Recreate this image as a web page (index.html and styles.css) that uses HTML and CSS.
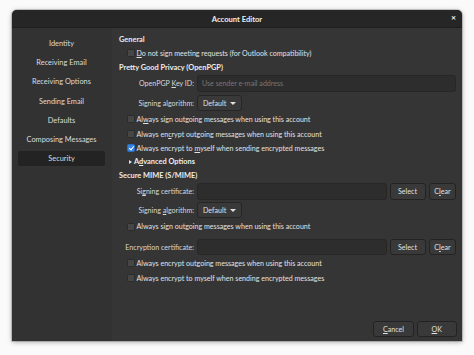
FILE: index.html
```html
<!DOCTYPE html>
<html lang="en">
<head>
    <meta charset="UTF-8">
    <title>Account Editor</title>
    <link rel="stylesheet" href="styles.css">
</head>
<body>
    <div class="window">
        <div class="titlebar">
            <span class="title">Account Editor</span>
            <span class="close">&#x2715;</span>
        </div>
        <div class="main">
            <!-- Page list -->
            <div class="sidebar">
                <div class="page">Identity</div>
                <div class="page">Receiving Email</div>
                <div class="page">Receiving Options</div>
                <div class="page">Sending Email</div>
                <div class="page">Defaults</div>
                <div class="page">Composing Messages</div>
                <div class="page selected">Security</div>
            </div>

            <div class="content">
                <div class="row r-general"><span class="heading">General</span></div>
                <div class="row r-cb1 indent"><span class="check"></span><span><u>D</u>o not sign meeting requests (for Outlook compatibility)</span></div>

                <div class="row r-pgp"><span class="heading">Pretty Good Privacy (OpenPGP)</span></div>
                <div class="row field r-keyid">
                    <span class="label">OpenPGP <u>K</u>ey ID:</span>
                    <span class="entry placeholder">Use sender e-mail address</span>
                </div>
                <div class="row field r-algo">
                    <span class="label">Signing algorithm:</span>
                    <span class="combo">Default <span class="arrow"></span></span>
                </div>
                <div class="row r-cb2 indent"><span class="check"></span><span>Al<u>w</u>ays sign outgoing messages when using this account</span></div>
                <div class="row r-cb3 indent"><span class="check"></span><span>Always en<u>c</u>rypt outgoing messages when using this account</span></div>
                <div class="row r-cb4 indent"><span class="check checked"></span><span>Always encrypt to <u>m</u>yself when sending encrypted messages</span></div>
                <div class="row r-adv indent"><span class="expander"></span><span class="heading">A<u>d</u>vanced Options</span></div>

                <div class="row r-smime"><span class="heading">Secure MIME (S/MIME)</span></div>
                <div class="row field r-signcert">
                    <span class="label">Si<u>g</u>ning certificate:</span>
                    <span class="entry"></span>
                    <span class="btn select">Select</span>
                    <span class="btn clear">C<u>l</u>ear</span>
                </div>
                <div class="row field r-algo2">
                    <span class="label">Signing <u>a</u>lgorithm:</span>
                    <span class="combo">Default <span class="arrow"></span></span>
                </div>
                <div class="row r-cb5 indent"><span class="check"></span><span>Always sign outgoing messages when using this account</span></div>
                <div class="row field r-enccert">
                    <span class="label">Encryption certificate:</span>
                    <span class="entry"></span>
                    <span class="btn select">Select</span>
                    <span class="btn clear">C<u>l</u>ear</span>
                </div>
                <div class="row r-cb6 indent"><span class="check"></span><span>Always encrypt outgoing messages when using this account</span></div>
                <div class="row r-cb7 indent"><span class="check"></span><span>Always encrypt to myself when sending encrypted messages</span></div>

                <div class="footer">
                    <span class="btn cancel"><u>C</u>ancel</span>
                    <span class="btn ok"><u>O</u>K</span>
                </div>
            </div>
        </div>
    </div>
</body>
</html>
```

FILE: styles.css
```css
* {
    margin: 0;
    padding: 0;
    box-sizing: border-box;
}

html, body {
    width: 474px;
    height: 355px;
    overflow: hidden;
}

body {
    background: #fafafa;
    font-family: Lato, "Open Sans", sans-serif;
    font-size: 7.4px;
    color: #e2e2e2;
}

u {
    text-decoration-thickness: 0.5px;
    text-underline-offset: 1px;
}

.window {
    margin: 10px 0 0 12px;
    width: 450px;
    height: 331px;
    background: #353535;
    border-radius: 5px 5px 0 0;
    box-shadow: 0 1px 5px rgba(0, 0, 0, 0.35), 0 0 0 1px rgba(0, 0, 0, 0.15);
    display: flex;
    flex-direction: column;
    overflow: hidden;
}

/* Header bar */
.titlebar {
    height: 18px;
    flex: none;
    background: #262626;
    border-bottom: 1px solid #1e1e1e;
    display: flex;
    align-items: center;
    justify-content: center;
    position: relative;
}

.title {
    font-weight: bold;
    font-size: 7.6px;
    color: #eeeeee;
}

.close {
    position: absolute;
    right: 6px;
    top: 4px;
    font-size: 6px;
    font-weight: bold;
    color: #eeeeee;
}

.main {
    flex: 1;
    display: flex;
    min-height: 0;
}

/* Page list */
.sidebar {
    width: 100px;
    flex: none;
    background: #323232;
    padding: 8px 7px 0 6px;
    display: flex;
    flex-direction: column;
    gap: 4.2px;
}

.page {
    height: 15px;
    display: flex;
    align-items: center;
    justify-content: center;
    color: #dcdcdc;
    border-radius: 2px;
}

.page.selected {
    background: #232323;
}

/* Settings page */
.content {
    flex: 1;
    padding: 5px 6px 4px 7px;
    display: flex;
    flex-direction: column;
    font-size: 7.1px;
}

.row {
    display: flex;
    align-items: center;
    flex: none;
}

.indent {
    padding-left: 8px;
}

.heading {
    font-weight: bold;
    font-size: 7.4px;
    color: #ececec;
}

.r-general { height: 13px; }
.r-cb1 { height: 14px; }
.r-pgp { height: 15px; }
.r-keyid { height: 17px; }
.r-algo { height: 16px; margin-top: 3px; }
.r-cb2 { height: 16px; }
.r-cb3 { height: 14px; }
.r-cb4 { height: 14px; }
.r-adv { height: 13px; }
.r-smime { height: 15px; }
.r-signcert { height: 17px; }
.r-algo2 { height: 16px; margin-top: 2px; }
.r-cb5 { height: 17px; }
.r-enccert { height: 16px; margin-top: 4px; }
.r-cb6 { height: 16px; }
.r-cb7 { height: 14px; }

.check {
    width: 8px;
    height: 8px;
    flex: none;
    margin: 0 2px 0 -0.5px;
    border-radius: 1.5px;
    background: #464646;
    border: 1px solid #2b2b2b;
}

.check.checked {
    background: #3584e4;
    border-color: #2a6fc4;
    position: relative;
}

.check.checked::after {
    content: "";
    position: absolute;
    left: 2px;
    top: 0.3px;
    width: 2px;
    height: 4px;
    border: solid #ffffff;
    border-width: 0 1.2px 1.2px 0;
    transform: rotate(40deg);
}

.expander {
    width: 0;
    height: 0;
    margin: 0 2px 0 2px;
    border-left: 3px solid #e0e0e0;
    border-top: 2.5px solid transparent;
    border-bottom: 2.5px solid transparent;
}

/* Label + control rows */
.field {
    gap: 3px;
}

.label {
    width: 75px;
    flex: none;
    text-align: right;
    color: #d8d8d8;
}

.entry {
    flex: 1;
    height: 100%;
    background: #2d2d2d;
    border: 1px solid #272727;
    border-radius: 3px;
    display: flex;
    align-items: center;
    padding-left: 4px;
}

.placeholder {
    color: #777777;
}

.combo {
    width: 45px;
    height: 16px;
    background: #393939;
    border: 1px solid #262626;
    border-radius: 3px;
    display: flex;
    align-items: center;
    padding-left: 5px;
    gap: 4px;
    color: #e0e0e0;
}

.arrow {
    width: 0;
    height: 0;
    border-top: 3px solid #e0e0e0;
    border-left: 3px solid transparent;
    border-right: 3px solid transparent;
}

.btn {
    height: 100%;
    flex: none;
    background: #393939;
    border: 1px solid #232323;
    border-radius: 3px;
    display: flex;
    align-items: center;
    justify-content: center;
    color: #e0e0e0;
}

.select {
    width: 36px;
}

.clear {
    width: 27px;
    margin-left: 0.5px;
}

.footer {
    margin-top: auto;
    display: flex;
    justify-content: flex-end;
    gap: 2.5px;
    margin-right: -1px;
}

.footer .btn {
    height: 16px;
}

.cancel {
    width: 41px;
}

.ok {
    width: 40.5px;
}
```
